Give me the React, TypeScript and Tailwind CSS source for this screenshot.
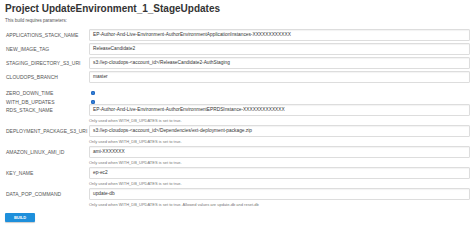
import React from 'react';

type Field = {
  name: string;
  value?: string;
  help?: string;
  checkbox?: boolean;
};

const HELP = 'Only used when WITH_DB_UPDATES is set to true.';

const fields: Field[] = [
  { name: 'APPLICATIONS_STACK_NAME', value: 'EP-Author-And-Live-Environment-AuthorEnvironmentApplicationInstances-XXXXXXXXXXXX' },
  { name: 'NEW_IMAGE_TAG', value: 'ReleaseCandidate2' },
  { name: 'STAGING_DIRECTORY_S3_URI', value: 's3://ep-cloudops-<account_id>/ReleaseCandidate2-AuthStaging' },
  { name: 'CLOUDOPS_BRANCH', value: 'master' },
  { name: 'ZERO_DOWN_TIME', checkbox: true },
  { name: 'WITH_DB_UPDATES', checkbox: true },
  { name: 'RDS_STACK_NAME', value: 'EP-Author-And-Live-Environment-AuthorEnvironmentEPRDSInstance-XXXXXXXXXXXXX', help: HELP },
  { name: 'DEPLOYMENT_PACKAGE_S3_URI', value: 's3://ep-cloudops-<account_id>/Dependencies/ext-deployment-package.zip', help: HELP },
  { name: 'AMAZON_LINUX_AMI_ID', value: 'ami-XXXXXXX', help: HELP },
  { name: 'KEY_NAME', value: 'ep-ec2', help: HELP },
  { name: 'DATA_POP_COMMAND', value: 'update-db', help: HELP + ' Allowed values are update-db and reset-db' },
];

function CheckRow({ name }: { name: string }) {
  return (
    <div className="flex items-center h-[9px]">
      <div className="w-[84px] pl-[1px] text-[5px] leading-[6px] text-[#555]">{name}</div>
      <span className="ml-[2px] w-[4px] h-[4px] rounded-[1px] bg-[#2f7fd8] border border-[#2a6cc0]" />
    </div>
  );
}

function InputRow({ field }: { field: Field }) {
  return (
    <div className="flex items-start">
      <div className="w-[84px] pl-[1px] pt-[3px] text-[5px] leading-[6px] text-[#555] whitespace-nowrap">{field.name}</div>
      <div className="flex-1">
        <div className="h-[12px] border border-[#ddd] rounded-[1px] bg-white shadow-[inset_0_1px_1px_rgba(0,0,0,0.05)] flex items-center px-[3px] text-[4.8px] text-[#333] whitespace-nowrap overflow-hidden">
          {field.value}
        </div>
        {field.help && (
          <div className="text-[4px] leading-[5px] text-[#777] mt-[2px] whitespace-nowrap">{field.help}</div>
        )}
      </div>
    </div>
  );
}

export default function App() {
  return (
    <div className="w-[474px] h-[229px] bg-white overflow-hidden pl-[5px] pr-[4px] pt-[2px]" style={{ fontFamily: '"Liberation Sans", Arial, sans-serif' }}>
      <h1 className="text-[10px] leading-[13px] font-semibold text-[#333]">Project UpdateEnvironment_1_StageUpdates</h1>
      <p className="text-[4.5px] leading-[6px] text-[#555] mt-[3px]">This build requires parameters:</p>
      <div className="mt-[5px] flex flex-col">
        {fields.slice(0, 4).map((f) => (
          <div key={f.name} className="mb-[2px]">
            <InputRow field={f} />
          </div>
        ))}
        <div className="mt-[3px]">
          <CheckRow name="ZERO_DOWN_TIME" />
          <CheckRow name="WITH_DB_UPDATES" />
        </div>
        <div className="mt-[-2px] flex flex-col gap-[2px]">
          {fields.slice(6).map((f) => (
            <InputRow key={f.name} field={f} />
          ))}
        </div>
      </div>
      <button className="block mt-[6px] w-[30px] h-[9px] bg-[#1e8fdb] text-white text-[4px] font-bold rounded-[1px] shadow-[0_1px_1px_rgba(0,0,0,0.2)]">
        BUILD
      </button>
    </div>
  );
}
